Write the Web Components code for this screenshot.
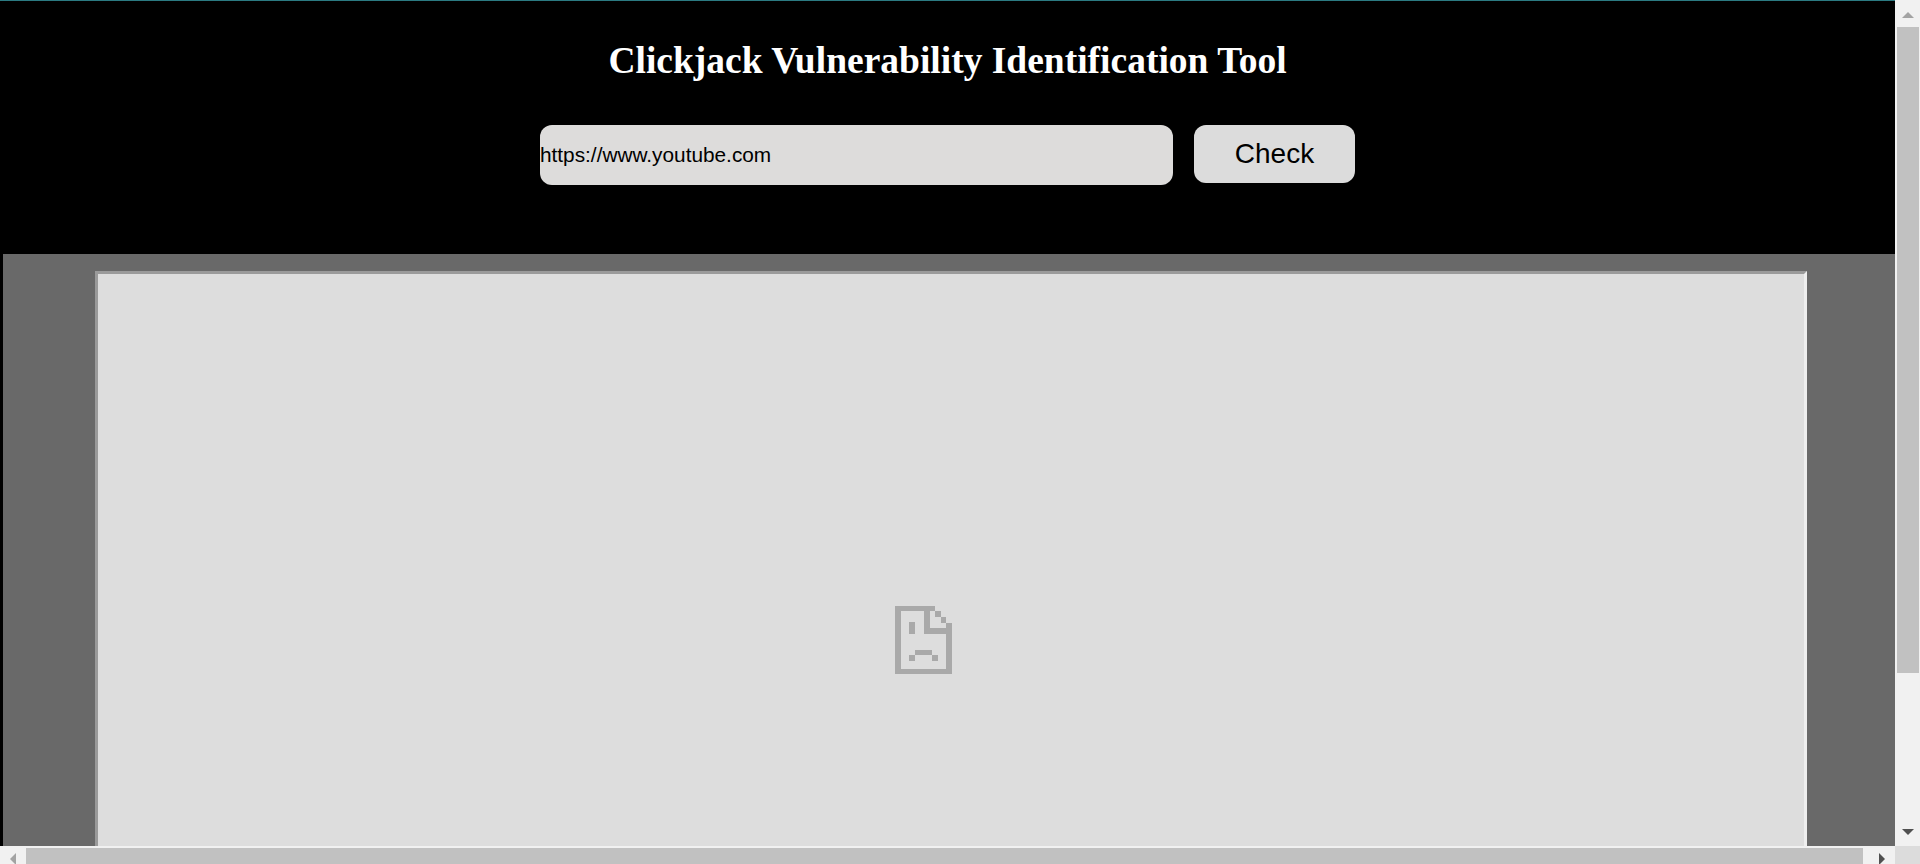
<!DOCTYPE html>
<html>
<head>
<meta charset="utf-8">
<title>Clickjack Vulnerability Identification Tool</title>
<style>
html, body { margin: 0; height: 100%; overflow: hidden; background: #f1f1f1; }
</style>
</head>
<body>
<app-window>
  <tool-header heading="Clickjack Vulnerability Identification Tool" url="https://www.youtube.com"></tool-header>
  <frame-preview></frame-preview>
</app-window>

<script>
class AppWindow extends HTMLElement {
  constructor() {
    super();
    this.attachShadow({ mode: "open" });
    this.shadowRoot.innerHTML = `
      <style>
        :host { display: grid; grid-template-columns: 1fr 25px; grid-template-rows: 1fr 18px; width: 1920px; height: 864px; overflow: hidden; }
        .view { display: flex; flex-direction: column; min-height: 0; overflow: hidden; border-top: 1px solid #2b7a82; background: #000; }
        .corner { background: #dcdcdc; }
      </style>
      <div class="view"><slot></slot></div>
      <scroll-bar orient="v"></scroll-bar>
      <scroll-bar orient="h"></scroll-bar>
      <div class="corner"></div>
    `;
  }
}

class ScrollBar extends HTMLElement {
  constructor() {
    super();
    this.attachShadow({ mode: "open" });
  }

  connectedCallback() {
    const v = this.getAttribute("orient") === "v";
    const back = v ? "6,0 12,6 0,6" : "6,0 6,12 0,6";
    const next = v ? "0,0 12,0 6,6" : "0,0 6,6 0,12";
    const box = v ? "0 0 12 6" : "0 0 6 12";
    const size = v ? 'width="12" height="6"' : 'width="6" height="12"';
    this.shadowRoot.innerHTML = `
      <style>
        :host { display: flex; min-height: 0; flex-direction: ${v ? "column" : "row"}; background: #f1f1f1; ${v ? "padding: 0 1px 0 2px;" : "padding-top: 2px;"} }
        .btn { box-sizing: border-box; display: flex; flex: none; }
        .back { ${v ? "height: 27px; padding-top: 12px; justify-content: center;" : "width: 26px; padding: 5px 0 0 10px;"} }
        .next { ${v ? "height: 173px; padding-top: 156px; justify-content: center;" : "width: 32px; padding: 5px 0 0 16px;"} }
        .track { flex: 1; min-height: 0; display: flex; flex-direction: ${v ? "column" : "row"}; }
        .thumb { flex: 1; background: #c1c1c1; }
        svg { display: block; flex: none; }
      </style>
      <div class="btn back"><svg ${size} viewBox="${box}"><polygon points="${back}" fill="#a3a3a3"/></svg></div>
      <div class="track"><div class="thumb"></div></div>
      <div class="btn next"><svg ${size} viewBox="${box}"><polygon points="${next}" fill="#505050"/></svg></div>
    `;
  }
}

class ToolHeader extends HTMLElement {
  constructor() {
    super();
    this.attachShadow({ mode: "open" });
  }

  connectedCallback() {
    this.shadowRoot.innerHTML = `
      <style>
        :host { display: block; flex: none; height: 253px; background: #000; }
        h1 { margin: 0; padding-top: 37px; font: bold 37.5px/46px "Liberation Serif", serif; color: #fff; text-align: center; }
        .row { display: flex; justify-content: center; align-items: flex-start; gap: 21px; margin-top: 41px; }
        .url { box-sizing: border-box; width: 633px; height: 60px; display: flex; align-items: center; border-radius: 12px; background: #dddcdb; font: 20.8px "Liberation Sans", sans-serif; color: #000; }
        .check { box-sizing: border-box; width: 161px; height: 58px; display: flex; align-items: center; justify-content: center; border-radius: 12px; background: #dcdcdc; font: 28px "Liberation Sans", sans-serif; color: #000; }
      </style>
      <h1>${this.getAttribute("heading")}</h1>
      <div class="row">
        <div class="url">${this.getAttribute("url")}</div>
        <div class="check">Check</div>
      </div>
    `;
  }
}

class FramePreview extends HTMLElement {
  constructor() {
    super();
    this.attachShadow({ mode: "open" });
    this.shadowRoot.innerHTML = `
      <style>
        :host { display: block; flex: 1; min-height: 0; overflow: hidden; margin-left: 3px; background: #696969; padding: 17px 88px 0 92px; }
        .frame { box-sizing: border-box; height: 900px; border: 3px solid; border-color: #9a9a9a #eee #eee #9a9a9a; background: #ddd; display: flex; justify-content: center; padding: 332px 55px 0 0; }
      </style>
      <div class="frame">
        <sad-page></sad-page>
      </div>
    `;
  }
}

class SadPage extends HTMLElement {
  constructor() {
    super();
    this.attachShadow({ mode: "open" });
    this.shadowRoot.innerHTML = `
      <style>
        :host { display: block; width: 57px; height: 68px; }
        svg { display: block; }
      </style>
      <svg width="57" height="68" viewBox="0 0 57 68" shape-rendering="crispEdges" fill="#a9a9a9">
        <path d="M0 0H40V5H35V22H57V68H0ZM6 5V63H51V28H29V5Z" fill-rule="evenodd"/>
        <rect x="40" y="5" width="6" height="6"/>
        <rect x="46" y="11" width="5" height="6"/>
        <rect x="51" y="17" width="6" height="5"/>
        <rect x="14" y="16" width="6" height="12"/>
        <rect x="20" y="44" width="17" height="5"/>
        <rect x="14" y="49" width="6" height="6"/>
        <rect x="37" y="49" width="6" height="6"/>
      </svg>
    `;
  }
}

customElements.define("scroll-bar", ScrollBar);
customElements.define("sad-page", SadPage);
customElements.define("frame-preview", FramePreview);
customElements.define("tool-header", ToolHeader);
customElements.define("app-window", AppWindow);
</script>
</body>
</html>
